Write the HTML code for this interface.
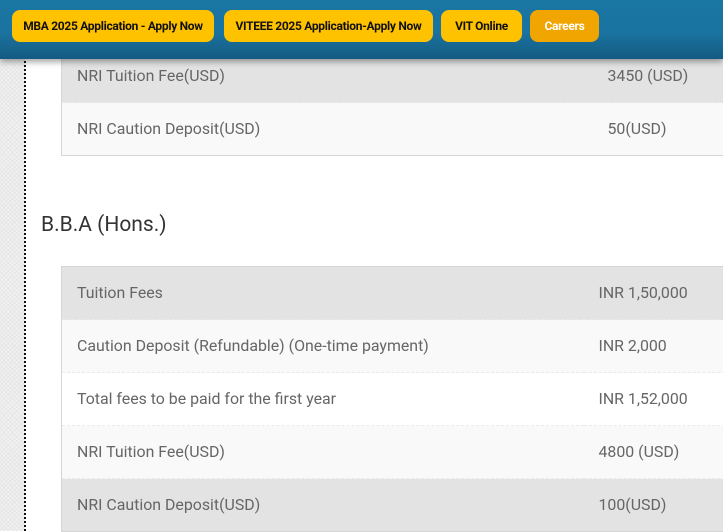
<!DOCTYPE html>
<html><head><style>
*{margin:0;padding:0;box-sizing:border-box}
body{width:723px;height:531px;overflow:hidden;background:#fff;font-family:"Roboto","Liberation Sans",sans-serif;position:relative}
.side{position:absolute;left:0;top:0;width:25px;height:531px;background-color:#f2f2f2;background-image:repeating-linear-gradient(45deg,#e6e6e6 0 1px,transparent 1px 3px),repeating-linear-gradient(-45deg,#e6e6e6 0 1px,transparent 1px 3px)}
.dot{position:absolute;left:24px;top:0;height:531px;border-left:2px dotted #111}
.hdr{position:absolute;left:0;top:0;width:723px;height:59px;background:linear-gradient(#1a76a3 0%,#1a73a0 55%,#145a82 100%);box-shadow:0 3px 6px rgba(0,0,0,.35);z-index:2}
.b{position:absolute;top:10px;height:32px;border-radius:8px;background:#ffc200;color:#111;font-size:12px;font-weight:bold;line-height:32px;text-align:center;letter-spacing:-.3px;white-space:nowrap}
table{position:absolute;left:61px;border-collapse:collapse;width:680px;border:1px solid #d6d6d6;font-size:15.9px;color:#666}
td{height:53px;padding-left:15px;padding-bottom:2px;border-bottom:1px dashed #eaeaea;white-space:nowrap}
.g td{background:#e3e3e3}.l td{background:#f9f9f9}.w td{background:#fff}
h3{position:absolute;left:41px;top:213px;font-weight:normal;font-size:21px;color:#333}
</style></head><body>
<div class="side"></div><div class="dot"></div>
<div class="hdr">
<div class="b" style="left:12px;width:202px">MBA 2025 Application - Apply Now</div>
<div class="b" style="left:224px;width:209px">VITEEE 2025 Application-Apply Now</div>
<div class="b" style="left:441px;width:81px">VIT Online</div>
<div class="b" style="left:530px;width:69px;background:#f0a500;color:#fff">Careers</div>
</div>
<table style="top:49px;width:680px">
<tr class="g"><td style="width:531px">NRI Tuition Fee(USD)</td><td>3450 (USD)</td></tr>
<tr class="l"><td>NRI Caution Deposit(USD)</td><td>50(USD)</td></tr>
</table>
<h3>B.B.A (Hons.)</h3>
<table style="top:266px">
<tr class="g"><td style="width:522px">Tuition Fees</td><td>INR 1,50,000</td></tr>
<tr class="l"><td>Caution Deposit (Refundable) (One-time payment)</td><td>INR 2,000</td></tr>
<tr class="w"><td>Total fees to be paid for the first year</td><td>INR 1,52,000</td></tr>
<tr class="l"><td>NRI Tuition Fee(USD)</td><td>4800 (USD)</td></tr>
<tr class="g"><td>NRI Caution Deposit(USD)</td><td>100(USD)</td></tr>
</table>
</body></html>
